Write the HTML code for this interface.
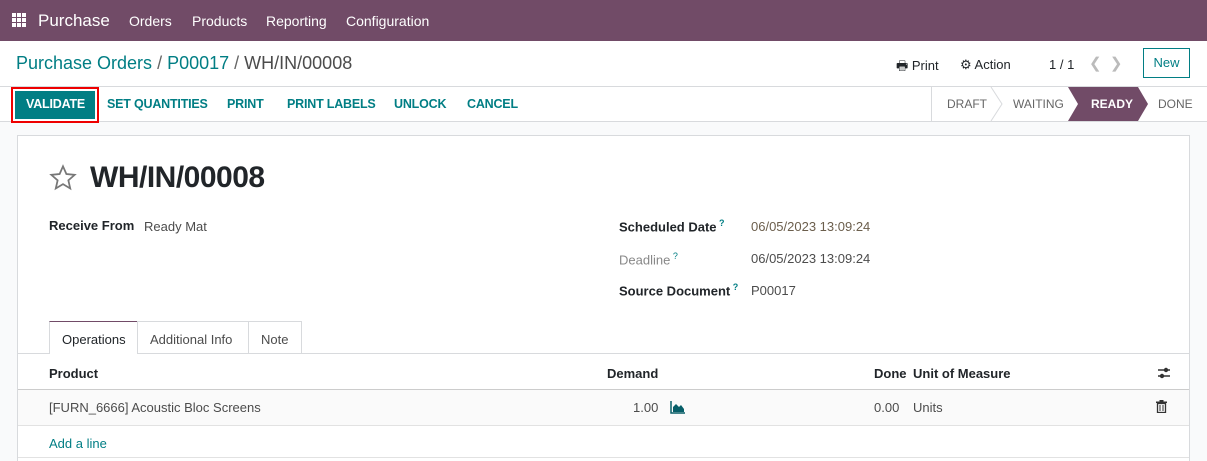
<!DOCTYPE html>
<html style="width:1207px;height:461px;overflow:hidden"><head><meta charset="utf-8"><style>
*{box-sizing:border-box;margin:0;padding:0}
html,body{width:1207px;height:461px;overflow:hidden}
body{font-family:"Liberation Sans",sans-serif;background:#f9fafb;position:relative;color:#4c4c4c}
.a{position:absolute;white-space:nowrap}
.nav{left:0;top:0;width:1207px;height:41px;background:#714b67;color:#fff}
.nav span{position:absolute;top:13px;font-size:14px}
.cp{left:0;top:41px;width:1207px;height:46px;background:#fff;border-bottom:1px solid #d8dadd}
.bar{left:0;top:87px;width:1207px;height:35px;background:#fff;border-bottom:1px solid #d8dadd}
.btn{font-size:12.5px;font-weight:bold;color:#017e84;top:97px;letter-spacing:-0.2px}
.sheet{left:17px;top:135px;width:1173px;height:326px;background:#fff;border:1px solid #d8dadd;border-bottom:none}
.lbl{font-size:13px;font-weight:bold;color:#212529}
.val{font-size:13px;color:#4c4c4c}
sup{font-size:9px;color:#017e84}
</style></head><body>
<div class="a nav">
 <svg class="a" style="left:12px;top:13px" width="14" height="14" viewBox="0 0 14 14" fill="#fff"><rect x="0" y="0" width="4" height="4"/><rect x="5" y="0" width="4" height="4"/><rect x="10" y="0" width="4" height="4"/><rect x="0" y="5" width="4" height="4"/><rect x="5" y="5" width="4" height="4"/><rect x="10" y="5" width="4" height="4"/><rect x="0" y="10" width="4" height="4"/><rect x="5" y="10" width="4" height="4"/><rect x="10" y="10" width="4" height="4"/></svg>
 <span style="left:38px;top:11px;font-size:17px">Purchase</span>
 <span style="left:129px">Orders</span><span style="left:192px">Products</span><span style="left:266px">Reporting</span><span style="left:346px">Configuration</span>
</div>
<div class="a cp"></div>
<div class="a" style="left:16px;top:53px;font-size:18px;color:#017e84">Purchase Orders <span style="color:#666">/</span> P00017 <span style="color:#666">/</span> <span style="color:#4c4c4c">WH/IN/00008</span></div>
<div class="a" style="left:896px;top:57px;font-size:13px;color:#212529">&#128438; Print</div>
<div class="a" style="left:960px;top:57px;font-size:13px;color:#212529">&#9881; Action</div>
<div class="a" style="left:1049px;top:57px;font-size:13px;color:#212529">1 / 1</div>
<div class="a" style="left:1089px;top:54px;font-size:15px;color:#bbb">&#10094;&nbsp;&nbsp;&#10095;</div>
<div class="a" style="left:1143px;top:48px;width:47px;height:30px;border:1px solid #017e84;color:#017e84;font-size:13px;text-align:center;line-height:28px">New</div>
<div class="a bar"></div>
<div class="a" style="left:11px;top:87px;width:88px;height:36px;border:2px solid #e00"></div>
<div class="a" style="left:15px;top:91px;width:80px;height:28px;background:#017e84"></div>
<div class="a btn" style="left:26px;color:#fff">VALIDATE</div>
<div class="a btn" style="left:107px">SET QUANTITIES</div>
<div class="a btn" style="left:227px">PRINT</div>
<div class="a btn" style="left:287px">PRINT LABELS</div>
<div class="a btn" style="left:394px">UNLOCK</div>
<div class="a btn" style="left:467px">CANCEL</div>
<div class="a" style="left:931px;top:87px;width:1px;height:34px;background:#d8dadd"></div>
<svg class="a" style="left:990px;top:87px" width="14" height="34"><polyline points="1,0 12,17 1,34" fill="none" stroke="#d8dadd"/></svg>
<svg class="a" style="left:1068px;top:87px" width="82" height="34"><polygon points="0,0 70,0 80,17 70,34 0,34 10,17" fill="#714b67"/></svg>
<div class="a" style="left:947px;top:97px;font-size:12px;color:#666">DRAFT</div>
<div class="a" style="left:1013px;top:97px;font-size:12px;color:#666">WAITING</div>
<div class="a" style="left:1091px;top:97px;font-size:12px;color:#fff;font-weight:bold">READY</div>
<div class="a" style="left:1158px;top:97px;font-size:12px;color:#666">DONE</div>
<div class="a sheet"></div>
<svg class="a" style="left:49px;top:164px" width="28" height="28" viewBox="0 0 24 24"><polygon points="12,2 14.9,8.6 22,9.3 16.6,14 18.2,21 12,17.3 5.8,21 7.4,14 2,9.3 9.1,8.6" fill="none" stroke="#777" stroke-width="1.5"/></svg>
<div class="a" style="left:90px;top:161px;font-size:30px;color:#212529;font-weight:bold;letter-spacing:-0.5px">WH/IN/00008</div>
<div class="a lbl" style="left:49px;top:218px">Receive From</div>
<div class="a val" style="left:144px;top:219px">Ready Mat</div>
<div class="a lbl" style="left:619px;top:218px">Scheduled Date<sup> ?</sup></div>
<div class="a val" style="left:751px;top:219px;color:#6b5e4c">06/05/2023 13:09:24</div>
<div class="a lbl" style="left:619px;top:251px;color:#888;font-weight:normal">Deadline<sup> ?</sup></div>
<div class="a val" style="left:751px;top:251px">06/05/2023 13:09:24</div>
<div class="a lbl" style="left:619px;top:282px">Source Document<sup> ?</sup></div>
<div class="a val" style="left:751px;top:283px">P00017</div>
<div class="a" style="left:18px;top:353px;width:1171px;height:1px;background:#d8dadd"></div>
<div class="a" style="left:49px;top:321px;width:89px;height:33px;background:#fff;border:1px solid #d8dadd;border-top-color:#714b67;border-bottom:none"></div>
<div class="a" style="left:137px;top:321px;width:112px;height:32px;border:1px solid #d8dadd;border-bottom:none"></div>
<div class="a" style="left:248px;top:321px;width:54px;height:32px;border:1px solid #d8dadd;border-bottom:none"></div>
<div class="a val" style="left:62px;top:332px;color:#212529">Operations</div>
<div class="a val" style="left:150px;top:332px">Additional Info</div>
<div class="a val" style="left:261px;top:332px">Note</div>
<div class="a lbl" style="left:49px;top:366px">Product</div>
<div class="a lbl" style="left:607px;top:366px">Demand</div>
<div class="a lbl" style="left:874px;top:366px">Done</div>
<div class="a lbl" style="left:913px;top:366px">Unit of Measure</div>
<svg class="a" style="left:1157px;top:366px" width="14" height="14"><line x1="1" y1="4" x2="13" y2="4" stroke="#333" stroke-width="1.5"/><line x1="1" y1="10" x2="13" y2="10" stroke="#333" stroke-width="1.5"/><circle cx="9" cy="4" r="2.2" fill="#333"/><circle cx="5" cy="10" r="2.2" fill="#333"/></svg>
<div class="a" style="left:18px;top:389px;width:1171px;height:37px;background:#fafafa;border-top:1px solid #ccc;border-bottom:1px solid #e2e2e2"></div>
<div class="a val" style="left:49px;top:400px">[FURN_6666] Acoustic Bloc Screens</div>
<div class="a val" style="left:633px;top:400px">1.00</div>
<svg class="a" style="left:670px;top:401px" width="16" height="13"><path d="M1,0V12H15" fill="none" stroke="#075e68" stroke-width="1.5"/><path d="M3,11V6L6,3L9,6L11,4L14,8V11Z" fill="#075e68"/></svg>
<div class="a val" style="left:874px;top:400px">0.00</div>
<div class="a val" style="left:913px;top:400px">Units</div>
<svg class="a" style="left:1156px;top:400px" width="11" height="13"><rect x="0" y="1.5" width="11" height="1.5" fill="#333"/><rect x="3.5" y="0" width="4" height="2" fill="#333"/><rect x="1.5" y="3.5" width="8" height="9" fill="none" stroke="#333" stroke-width="1.3"/><line x1="4" y1="5" x2="4" y2="11" stroke="#333"/><line x1="7" y1="5" x2="7" y2="11" stroke="#333"/></svg>
<div class="a val" style="left:49px;top:436px;color:#017e84">Add a line</div>
<div class="a" style="left:18px;top:457px;width:1171px;height:1px;background:#e2e2e2"></div>
</body></html>
